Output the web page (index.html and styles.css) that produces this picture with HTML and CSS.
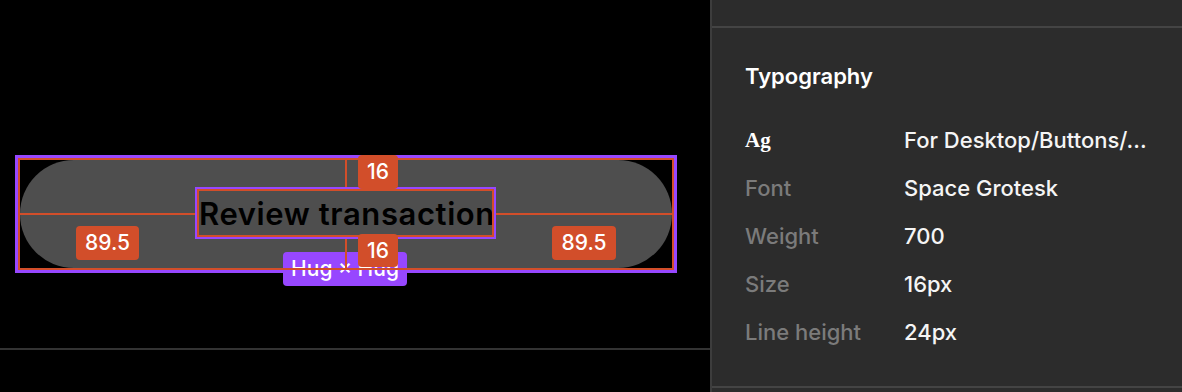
FILE: index.html
```html
<!DOCTYPE html>
<html>
<head>
<meta charset="utf-8">
<link rel="stylesheet" href="styles.css">
</head>
<body>
<div class="app">
  <div class="canvas">
    <div class="stage">
      <div class="frame">
        <div class="pill">
          <span class="guide guide-h guide-left"></span>
          <span class="guide guide-h guide-right"></span>
          <span class="guide guide-v guide-top"></span>
          <span class="guide guide-v guide-bottom"></span>
          <div class="text-sel">
            <div class="text-pad">Review transaction</div>
          </div>
        </div>
      </div>
      <div class="pad-outline"></div>
      <div class="hug-badge">Hug × Hug</div>
      <div class="badge badge-top">16</div>
      <div class="badge badge-bottom">16</div>
      <div class="badge badge-left">89.5</div>
      <div class="badge badge-right">89.5</div>
    </div>
  </div>
  <div class="panel">
    <div class="panel-top"></div>
    <div class="section">
      <div class="section-title">Typography</div>
      <div class="props">
        <div class="prop-label ag">Ag</div>
        <div class="prop-value">For Desktop/Buttons/...</div>
        <div class="prop-label">Font</div>
        <div class="prop-value">Space Grotesk</div>
        <div class="prop-label">Weight</div>
        <div class="prop-value">700</div>
        <div class="prop-label">Size</div>
        <div class="prop-value">16px</div>
        <div class="prop-label">Line height</div>
        <div class="prop-value">24px</div>
      </div>
    </div>
  </div>
</div>
</body>
</html>
```

FILE: styles.css
```css
html, body {
  margin: 0;
  padding: 0;
  background: #000;
  width: 1182px;
  height: 392px;
  overflow: hidden;
  font-family: Inter, "Liberation Sans", sans-serif;
}

.app {
  display: flex;
  height: 392px;
}

.canvas {
  width: 710px;
  flex: none;
  background: #000;
}

.stage {
  position: relative;
  height: 350px;
  box-sizing: border-box;
  border-bottom: 2px solid #333333;
  padding: 155px 0 0 15px;
}

.frame {
  width: 662px;
  height: 118px;
  box-sizing: border-box;
  border: 3px solid #9747ff;
  padding: 2px;
}

.pill {
  position: relative;
  height: 108px;
  background: #4e4e4e;
  border-radius: 54px;
  display: flex;
  align-items: center;
  justify-content: center;
}

.guide {
  position: absolute;
  background: #d24e2a;
  z-index: 2;
}

.guide-h {
  height: 2px;
  top: 53px;
}

.guide-left {
  left: 0;
  width: 175px;
}

.guide-right {
  left: 476px;
  right: 0;
}

.guide-v {
  width: 2px;
  left: 325px;
}

.guide-top {
  top: 0;
  height: 27px;
}

.guide-bottom {
  top: 79px;
  bottom: 0;
}

.text-sel {
  border: 2px solid #9747ff;
  margin-top: -2px;
  margin-left: -1px;
}

.text-pad {
  width: 293px;
  height: 44px;
  border: 2px solid #d24e2a;
  color: #000;
  font-size: 31px;
  font-weight: 600;
  line-height: 46px;
  text-align: center;
  white-space: nowrap;
  letter-spacing: 0.6px;
  overflow: hidden;
}

.pad-outline {
  position: absolute;
  left: 18px;
  top: 158px;
  width: 652px;
  height: 108px;
  border: 2px solid #d24e2a;
  z-index: 2;
}

.hug-badge {
  position: absolute;
  left: 283px;
  top: 252px;
  width: 124px;
  height: 34px;
  background: #9747ff;
  border-radius: 4px;
  color: #fff;
  font-size: 21px;
  font-weight: 500;
  line-height: 34px;
  text-align: center;
  z-index: 1;
}

.badge {
  position: absolute;
  height: 34px;
  background: #d24e2a;
  border-radius: 4px;
  color: #fff;
  font-size: 21px;
  font-weight: 500;
  line-height: 34px;
  text-align: center;
  z-index: 3;
}

.badge-top {
  left: 358px;
  top: 155px;
  width: 40px;
}

.badge-bottom {
  left: 358px;
  top: 234px;
  width: 40px;
  height: 33px;
  line-height: 33px;
}

.badge-left {
  left: 76px;
  top: 226px;
  width: 63px;
}

.badge-right {
  left: 552px;
  top: 226px;
  width: 64px;
}

.panel {
  flex: 1;
  background: #2c2c2c;
  border-left: 2px solid #3d3d3d;
  display: flex;
  flex-direction: column;
}

.panel-top {
  height: 26px;
  border-bottom: 2px solid #444444;
  flex: none;
}

.section {
  height: 360px;
  box-sizing: border-box;
  border-bottom: 2px solid #444444;
  padding: 34px 0 0 33px;
}

.section-title {
  color: #fff;
  font-size: 22px;
  font-weight: 600;
  line-height: 28px;
  margin-bottom: 26px;
}

.props {
  display: grid;
  grid-template-columns: 159px 1fr;
  grid-auto-rows: 48px;
  align-items: center;
  font-size: 22px;
  font-weight: 500;
}

.prop-label {
  color: #7b7b7b;
}

.prop-label.ag {
  color: #fff;
  font-family: "Liberation Serif", "DejaVu Serif", serif;
  font-weight: 700;
  font-size: 21px;
}

.prop-value {
  color: #f5f5f5;
  white-space: nowrap;
}
```
